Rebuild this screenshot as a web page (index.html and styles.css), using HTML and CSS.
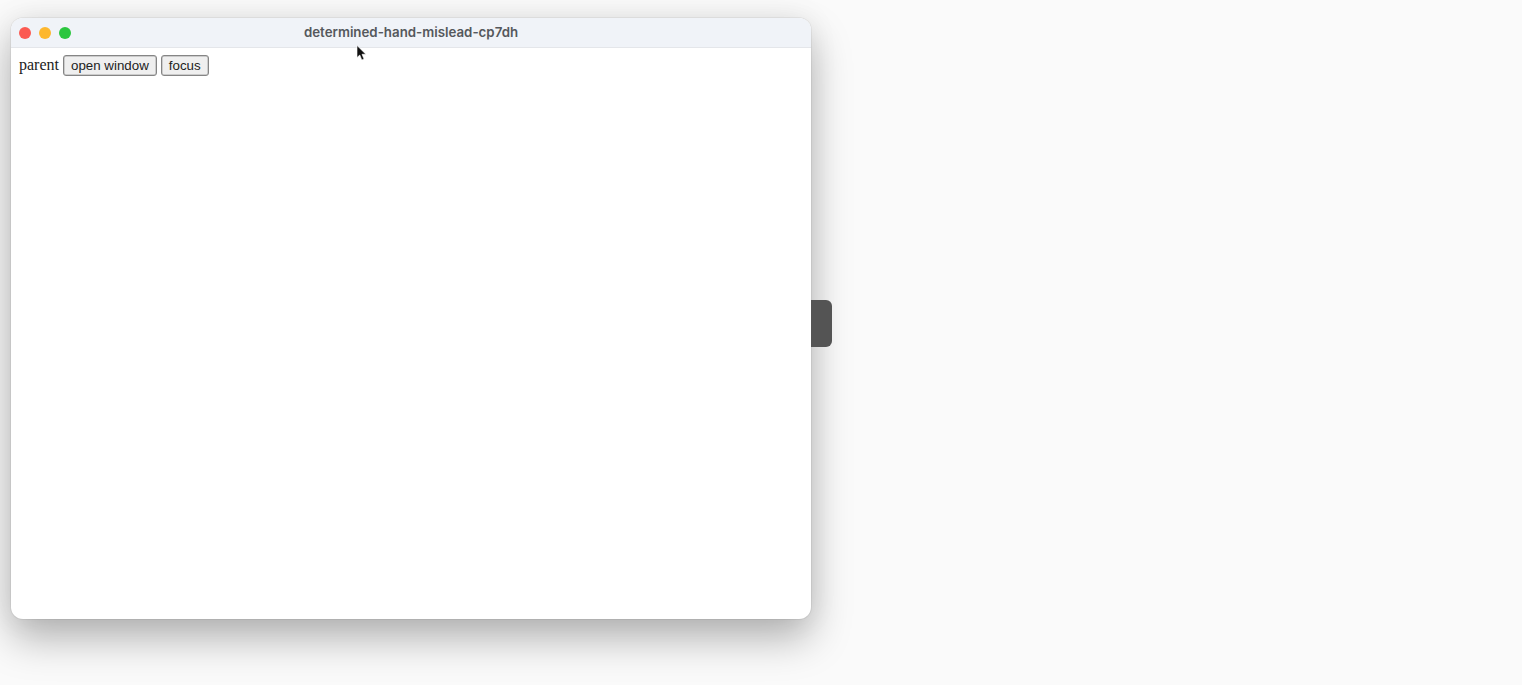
FILE: index.html
```html
<!DOCTYPE html>
<html lang="en">
<head>
    <meta charset="UTF-8">
    <title>determined-hand-mislead-cp7dh</title>
    <link rel="stylesheet" href="styles.css">
</head>
<body>

    <!-- Browser window -->
    <div class="window">
        <div class="title-bar">
            <div class="lights">
                <span class="light red"></span>
                <span class="light yellow"></span>
                <span class="light green"></span>
            </div>
            <div class="title">determined-hand-mislead-cp7dh</div>
        </div>
        <div class="content">
            parent
            <button class="btn">open window</button>
            <button class="btn">focus</button>
        </div>
        <div class="handle"></div>
    </div>

    <!-- Mouse pointer -->
    <svg class="cursor" width="12" height="18" viewBox="0 0 12 18">
        <path d="M1 0.5 L1 12.5 L3.8 10 L5.8 15 L8 14 L6 9.3 L9.8 9.2 Z" fill="#111" stroke="#fff" stroke-width="0.6"/>
    </svg>

</body>
</html>
```

FILE: styles.css
```css
/* General Styles */
body {
    margin: 0;
    height: 685px;
    padding: 18px 0 0 11px;
    box-sizing: border-box;
    overflow: hidden;
    background: #fafafa;
    position: relative;
}

/* Window */
.window {
    width: 800px;
    height: 601px;
    position: relative;
    background: white;
    border-radius: 12px;
    box-shadow: 0 0 0 1px rgba(0, 0, 0, 0.05), 0 20px 40px rgba(0, 0, 0, 0.28), 0 0 30px rgba(0, 0, 0, 0.07);
}

.title-bar {
    height: 28px;
    padding-bottom: 1px;
    position: relative;
    display: flex;
    align-items: center;
    justify-content: center;
    background: #f0f3f8;
    border-bottom: 1px solid #e4e6ea;
    border-radius: 12px 12px 0 0;
}

.lights {
    position: absolute;
    left: 8px;
    top: 9px;
    display: flex;
    gap: 8px;
}

.light {
    width: 12px;
    height: 12px;
    border-radius: 50%;
}

.red {
    background: #fb5a52;
}

.yellow {
    background: #fdb72e;
}

.green {
    background: #2bc63f;
}

.title {
    font-family: Inter, "Liberation Sans", sans-serif;
    font-size: 13.3px;
    font-weight: 600;
    color: #55585c;
}

/* Page inside the window */
.content {
    padding: 7px 8px;
    font-family: "Liberation Serif", serif;
    font-size: 16px;
    color: #1c1c1c;
}

.btn {
    height: 21px;
    padding: 0 7px;
    font-family: "Liberation Sans", sans-serif;
    font-size: 13.33px;
    color: #222;
    background: #efefef;
    border: 1px solid #858585;
    box-shadow: inset 0 0 0 0.5px #a8a8a8;
    border-radius: 3px;
}

/* Dark tab on the right edge */
.handle {
    position: absolute;
    left: 800px;
    top: 282px;
    width: 21px;
    height: 47px;
    background: #545454;
    border-radius: 0 6px 6px 0;
}

.cursor {
    position: absolute;
    left: 356px;
    top: 45px;
}
```
